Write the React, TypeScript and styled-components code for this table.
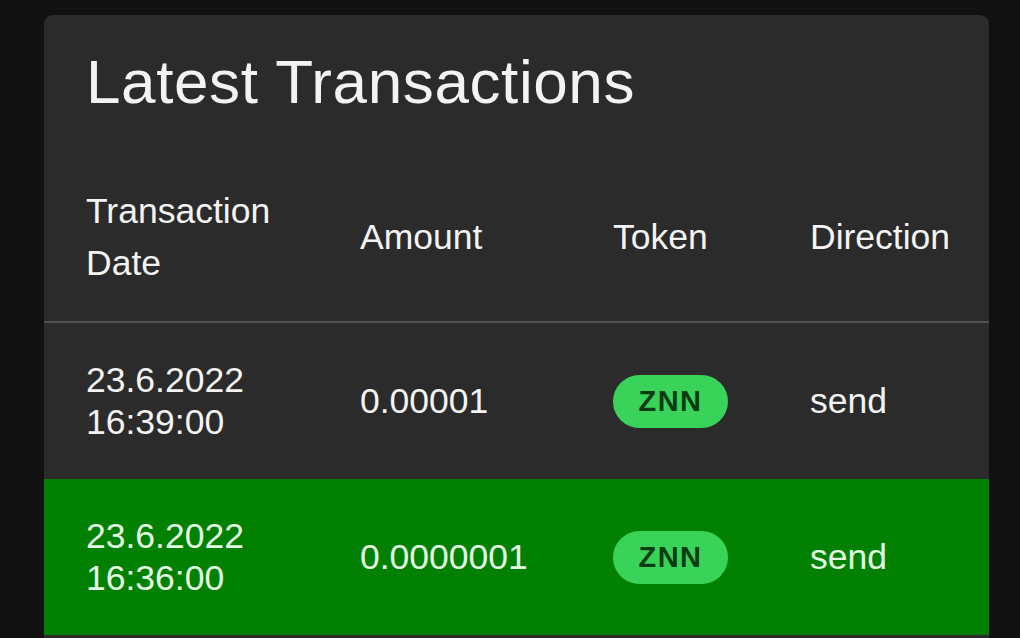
import React from "react";
import styled, { createGlobalStyle } from "styled-components";

const Global = createGlobalStyle`
  html, body { margin: 0; padding: 0; background: #111111; }
  body { font-family: "Liberation Sans", Arial, Helvetica, sans-serif; overflow: hidden; }
`;

const Page = styled.div`
  padding: 15px 31px 0 44px;
  height: 638px;
  box-sizing: border-box;
  overflow: hidden;
`;

const Card = styled.section`
  background: #2b2b2b;
  border-radius: 9px 9px 0 0;
  padding-top: 32px;
  min-height: 700px;
  color: #f3f3f3;
`;

const Title = styled.h1`
  margin: 0 0 36px;
  padding-left: 42px;
  font-size: 62px;
  font-weight: 400;
  line-height: 70px;
  letter-spacing: 0.6px;
`;

const Row = styled.div<{ $head?: boolean; $highlight?: boolean }>`
  display: grid;
  grid-template-columns: 274px 253px 197px 1fr;
  align-items: center;
  padding-left: 42px;
  height: ${(p) => (p.$head ? "170px" : "156px")};
  background: ${(p) => (p.$highlight ? "#018001" : "transparent")};
  color: ${(p) => (p.$highlight ? "#e4f8e4" : "#f3f3f3")};
  border-bottom: ${(p) => (p.$head ? "2px solid #515151" : "none")};
  box-sizing: border-box;
`;

const HeadCell = styled.div`
  font-size: 35.5px;
  line-height: 52px;
`;

const Cell = styled.div`
  font-size: 35.5px;
  line-height: 42px;
`;

const Badge = styled.span`
  display: inline-flex;
  align-items: center;
  justify-content: center;
  width: 115px;
  height: 53px;
  border-radius: 27px;
  background: #3ad35a;
  color: #0b3b14;
  font-size: 29px;
  font-weight: 700;
  letter-spacing: 1.5px;
`;

type Tx = { date: string; time: string; amount: string; token: string; direction: string };

const txs: Tx[] = [
  { date: "23.6.2022", time: "16:39:00", amount: "0.00001", token: "ZNN", direction: "send" },
  { date: "23.6.2022", time: "16:36:00", amount: "0.0000001", token: "ZNN", direction: "send" },
];

export default function App() {
  return (
    <>
      <Global />
      <Page>
        <Card>
          <Title>Latest Transactions</Title>
          <Row $head>
            <HeadCell>
              Transaction
              <br />
              Date
            </HeadCell>
            <HeadCell>Amount</HeadCell>
            <HeadCell>Token</HeadCell>
            <HeadCell>Direction</HeadCell>
          </Row>
          {txs.map((t, i) => (
            <Row key={i} $highlight={i === 1}>
              <Cell>
                {t.date}
                <br />
                {t.time}
              </Cell>
              <Cell>{t.amount}</Cell>
              <Cell>
                <Badge>{t.token}</Badge>
              </Cell>
              <Cell>{t.direction}</Cell>
            </Row>
          ))}
        </Card>
      </Page>
    </>
  );
}
